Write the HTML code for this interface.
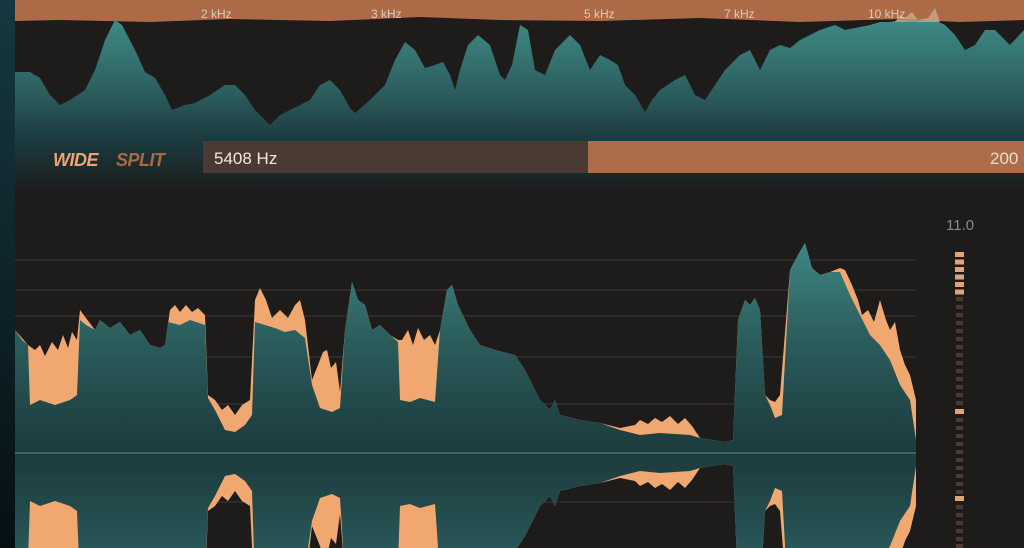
<!DOCTYPE html>
<html><head><meta charset="utf-8"><style>
html,body{margin:0;padding:0;background:#1c1b1a;}
body{width:1024px;height:548px;overflow:hidden;position:relative;font-family:"Liberation Sans",sans-serif;}
svg{position:absolute;left:0;top:0;}
</style></head><body>
<svg width="1024" height="548" viewBox="0 0 1024 548">
<defs>
<linearGradient id="lt" x1="0" y1="0" x2="0" y2="1"><stop offset="0" stop-color="#163840"/><stop offset="1" stop-color="#061013"/></linearGradient>
<linearGradient id="tg" x1="0" y1="20" x2="0" y2="140" gradientUnits="userSpaceOnUse"><stop offset="0" stop-color="#3f8a85"/><stop offset="0.6" stop-color="#2c5e5e"/><stop offset="1" stop-color="#1c3a3e"/></linearGradient>
<linearGradient id="wg" x1="0" y1="240" x2="0" y2="453" gradientUnits="userSpaceOnUse"><stop offset="0" stop-color="#3f8884"/><stop offset="0.5" stop-color="#2a5a5a"/><stop offset="1" stop-color="#1c3a3c"/></linearGradient>
<linearGradient id="sh" x1="0" y1="140" x2="0" y2="195" gradientUnits="userSpaceOnUse"><stop offset="0" stop-color="#1c3a3e"/><stop offset="1" stop-color="#1c1b1a"/></linearGradient>
</defs>
<rect x="0" y="0" width="1024" height="548" fill="#1d1c1b"/>
<path d="M15,0 H1024 V20 L960,22 900,19 800,22 700,18 600,21 500,20 420,17 330,21 230,19 150,22 60,20 15,21 Z" fill="#ad6a47"/>
<path d="M15,72 L30,72 40,78 50,95 60,105 70,100 85,90 95,70 105,40 115,20 122,25 135,50 145,72 155,78 165,95 172,110 185,105 195,103 210,95 225,85 235,85 245,95 255,110 270,125 280,115 300,105 310,100 320,85 330,80 340,90 350,108 355,113 370,100 385,85 395,60 405,42 415,50 425,68 435,65 443,62 450,75 455,90 460,70 468,45 478,35 490,45 500,75 505,80 512,65 520,25 528,30 535,70 545,75 555,50 570,35 580,45 590,70 600,55 610,60 618,65 625,85 635,95 645,112 652,100 660,90 675,80 685,75 695,95 705,100 715,85 725,70 740,55 750,50 760,70 770,50 780,45 790,48 800,40 810,35 820,30 835,25 845,30 855,28 870,25 880,22 890,22 900,20 915,22 925,20 935,20 945,25 955,35 965,50 975,45 985,30 995,30 1010,45 1024,30 L1024,140 L15,140 Z" fill="url(#tg)"/>
<path d="M895,22 L900,15 905,18 912,12 918,20 928,18 935,8 940,22 Z" fill="#c8a88c" opacity="0.8"/>
<rect x="15" y="140" width="1009" height="55" fill="url(#sh)"/>
<g font-size="12" fill="#d9cbbd">
<text x="201" y="18">2 kHz</text><text x="371" y="18">3 kHz</text><text x="584" y="18">5 kHz</text><text x="724" y="18">7 kHz</text><text x="868" y="18">10 kHz</text>
</g>
<rect x="203" y="141" width="385" height="32" fill="#4a3a33"/>
<rect x="588" y="141" width="436" height="32" fill="#ad6d4b"/>
<text x="214" y="164" font-size="17" fill="#f0e8e0">5408 Hz</text>
<text x="990" y="164" font-size="17" fill="#eadbd0">200</text>
<text x="53" y="166" font-size="18" font-style="italic" font-weight="600" fill="#eba474" letter-spacing="-0.5">WIDE</text>
<text x="116" y="166" font-size="18" font-style="italic" font-weight="600" fill="#a96a48" letter-spacing="-0.5">SPLIT</text>
<g stroke="#ffffff" stroke-opacity="0.13" stroke-width="1">
<line x1="15" y1="260" x2="916" y2="260"/><line x1="15" y1="290" x2="916" y2="290"/><line x1="15" y1="316" x2="916" y2="316"/><line x1="15" y1="357" x2="916" y2="357"/><line x1="15" y1="404" x2="916" y2="404"/><line x1="15" y1="502" x2="916" y2="502"/>
</g>
<g id="wave">
<path d="M15,330 L22,338 28,345 35,350 40,345 45,356 52,342 58,350 63,335 68,348 72,332 77,340 80,310 86,318 95,330 100,320 110,328 120,322 130,335 140,330 150,345 160,348 165,345 170,310 175,305 180,312 186,305 192,312 198,308 205,315 208,395 215,400 222,410 228,405 235,415 242,405 250,400 255,300 260,288 266,300 272,318 280,310 288,318 295,305 300,300 305,320 312,380 318,365 323,352 327,350 331,368 336,362 340,392 345,330 352,282 358,300 365,305 372,330 380,325 390,335 398,340 402,340 408,330 413,345 418,328 424,340 430,335 435,345 440,330 447,290 452,285 458,305 470,330 480,345 495,350 515,355 525,370 540,400 550,410 555,400 560,415 580,420 600,423 620,428 635,425 640,420 648,424 655,418 662,422 670,416 678,424 685,418 692,426 700,438 725,442 733,440 738,320 745,300 750,305 755,298 760,310 765,395 770,400 775,402 780,395 790,270 798,255 805,243 812,268 820,275 830,272 840,268 845,270 852,285 858,300 862,315 868,310 874,322 880,300 886,320 890,330 895,322 900,350 905,365 910,375 916,400 916,453 L15,453 Z" fill="#f0a870"/>
<path d="M15,330 L22,340 28,345 30,405 40,400 55,405 70,400 77,395 80,320 86,325 95,330 100,320 110,328 120,322 130,335 140,330 150,345 160,348 165,345 168,322 180,325 190,320 205,325 208,398 215,410 225,430 235,432 245,425 252,415 255,322 265,325 275,328 285,332 295,330 305,338 312,385 320,408 332,412 340,408 345,330 352,282 358,300 365,305 372,330 380,325 390,335 398,342 400,400 410,402 420,398 435,402 440,330 447,290 452,285 458,305 470,330 480,345 495,350 515,355 525,370 540,400 550,410 555,400 560,415 580,420 600,423 620,430 640,435 660,433 690,435 700,438 725,442 733,440 738,320 745,300 750,305 755,298 760,310 765,395 770,405 775,418 782,415 790,270 798,255 805,243 812,268 820,275 830,272 840,272 850,295 860,315 870,335 880,345 890,360 900,385 910,400 916,440 916,453 L15,453 Z" fill="url(#wg)"/>
</g>
<g transform="translate(0,906) scale(1,-1)">
<use href="#wave"/>
</g>
<line x1="15" y1="453" x2="916" y2="453" stroke="#8fb8b6" stroke-opacity="0.45" stroke-width="1.5"/>
<rect x="0" y="0" width="15" height="548" fill="url(#lt)"/>
<text x="946" y="230" font-size="15" fill="#8c8884">11.0</text>
<g fill="#e3a375">
<rect x="955" y="252" width="9" height="5"/><rect x="955" y="259.5" width="9" height="5"/><rect x="955" y="267" width="9" height="5"/><rect x="955" y="274.5" width="9" height="5"/><rect x="955" y="282" width="9" height="5"/><rect x="955" y="289.5" width="9" height="5"/>
<rect x="955" y="409" width="9" height="5"/><rect x="955" y="496" width="9" height="5"/>
</g>
<g fill="#4b3b33">
<rect x="956" y="297" width="7" height="4"/><rect x="956" y="305" width="7" height="4"/><rect x="956" y="313" width="7" height="4"/><rect x="956" y="321" width="7" height="4"/><rect x="956" y="329" width="7" height="4"/><rect x="956" y="337" width="7" height="4"/><rect x="956" y="345" width="7" height="4"/><rect x="956" y="353" width="7" height="4"/><rect x="956" y="361" width="7" height="4"/><rect x="956" y="369" width="7" height="4"/><rect x="956" y="377" width="7" height="4"/><rect x="956" y="385" width="7" height="4"/><rect x="956" y="393" width="7" height="4"/><rect x="956" y="401" width="7" height="4"/>
<rect x="956" y="418" width="7" height="4"/><rect x="956" y="426" width="7" height="4"/><rect x="956" y="434" width="7" height="4"/><rect x="956" y="442" width="7" height="4"/><rect x="956" y="450" width="7" height="4"/><rect x="956" y="458" width="7" height="4"/><rect x="956" y="466" width="7" height="4"/><rect x="956" y="474" width="7" height="4"/><rect x="956" y="482" width="7" height="4"/><rect x="956" y="490" width="7" height="4"/>
<rect x="956" y="505" width="7" height="4"/><rect x="956" y="513" width="7" height="4"/><rect x="956" y="521" width="7" height="4"/><rect x="956" y="529" width="7" height="4"/><rect x="956" y="537" width="7" height="4"/><rect x="956" y="544" width="7" height="4"/>
</g>
</svg>
</body></html>
